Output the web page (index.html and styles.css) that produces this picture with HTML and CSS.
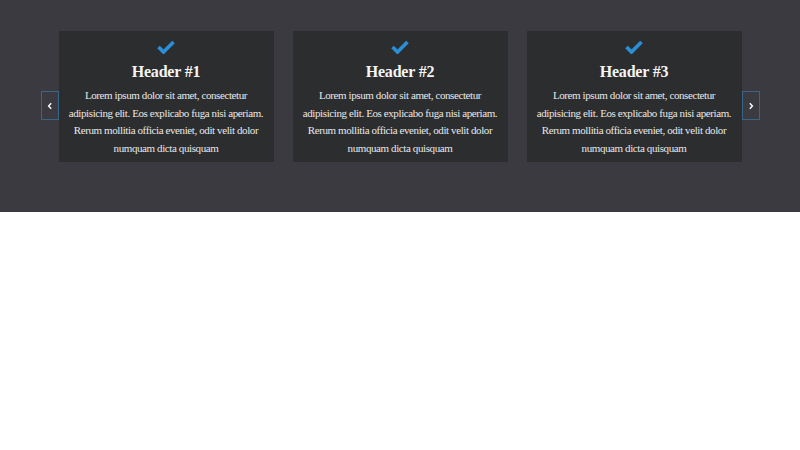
FILE: index.html
```html
<!DOCTYPE html>
<html lang="en">
<head>
  <meta charset="UTF-8">
  <meta name="viewport" content="width=device-width, initial-scale=1.0">
  <title>Features</title>
  <link rel="stylesheet" href="styles.css">
</head>
<body>

  <section class="features">
    <div class="slider">

      <button class="arrow" aria-label="Previous">
        <svg width="8" height="8" viewBox="0 0 8 8"><path d="M5.2 1.2 L2.6 4 L5.2 6.8" fill="none" stroke="#fff" stroke-width="1.4"/></svg>
      </button>

      <div class="cards">
        <!-- Card 1 -->
        <div class="card">
          <svg class="check" width="18" height="14" viewBox="0 0 18 14"><path d="M1.5 7 L6.5 12 L16.5 2" fill="none" stroke="#2a8fd6" stroke-width="3.6"/></svg>
          <h3>Header #1</h3>
          <p>Lorem ipsum dolor sit amet, consectetur adipisicing elit. Eos explicabo fuga nisi aperiam. Rerum mollitia officia eveniet, odit velit dolor numquam dicta quisquam</p>
        </div>

        <!-- Card 2 -->
        <div class="card">
          <svg class="check" width="18" height="14" viewBox="0 0 18 14"><path d="M1.5 7 L6.5 12 L16.5 2" fill="none" stroke="#2a8fd6" stroke-width="3.6"/></svg>
          <h3>Header #2</h3>
          <p>Lorem ipsum dolor sit amet, consectetur adipisicing elit. Eos explicabo fuga nisi aperiam. Rerum mollitia officia eveniet, odit velit dolor numquam dicta quisquam</p>
        </div>

        <!-- Card 3 -->
        <div class="card">
          <svg class="check" width="18" height="14" viewBox="0 0 18 14"><path d="M1.5 7 L6.5 12 L16.5 2" fill="none" stroke="#2a8fd6" stroke-width="3.6"/></svg>
          <h3>Header #3</h3>
          <p>Lorem ipsum dolor sit amet, consectetur adipisicing elit. Eos explicabo fuga nisi aperiam. Rerum mollitia officia eveniet, odit velit dolor numquam dicta quisquam</p>
        </div>
      </div>

      <button class="arrow" aria-label="Next">
        <svg width="8" height="8" viewBox="0 0 8 8"><path d="M2.8 1.2 L5.4 4 L2.8 6.8" fill="none" stroke="#fff" stroke-width="1.4"/></svg>
      </button>

    </div>
  </section>

</body>
</html>
```

FILE: styles.css
```css
body {
  font-family: "Liberation Serif", "Times New Roman", serif;
  background-color: #fff;
  margin: 0;
  padding: 0;
}

.features {
  background-color: #3a3a40;
  padding: 31px 0 50px;
}

.slider {
  display: flex;
  justify-content: center;
  align-items: flex-start;
}

.arrow {
  width: 18px;
  height: 29px;
  margin-top: 60px;
  padding: 0;
  background-color: transparent;
  border: 1px solid #3b6587;
  display: flex;
  align-items: center;
  justify-content: center;
  cursor: pointer;
}

.cards {
  display: flex;
  gap: 19px;
}

.card {
  width: 215px;
  box-sizing: border-box;
  height: 131px;
  background-color: #2c2d2f;
  padding: 9px 9px 0;
  text-align: center;
  color: #e8e8e8;
}

.check {
  display: block;
  margin: 0 auto;
}

.card h3 {
  margin: 8px 0 5px;
  font-size: 16px;
  line-height: 20px;
  letter-spacing: -0.2px;
  color: #f4f4f4;
}

.card p {
  margin: 0;
  font-size: 11px;
  line-height: 17.5px;
  letter-spacing: -0.4px;
}
```
